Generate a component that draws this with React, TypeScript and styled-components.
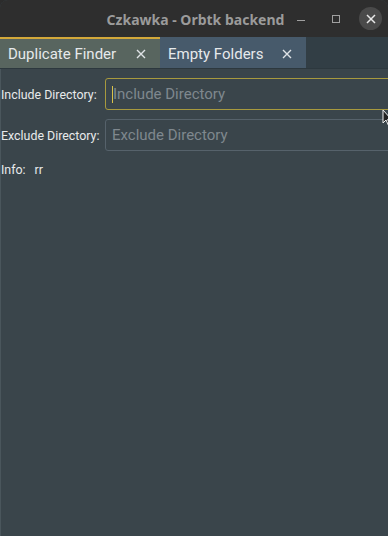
import React from 'react'
import styled, { createGlobalStyle } from 'styled-components'

const GlobalStyle = createGlobalStyle`
  html, body { margin: 0; padding: 0; background: #2c2c2c; }
  body { font-family: Roboto, "Noto Sans", sans-serif; }
`

const Window = styled.div`
  width: 388px;
  height: 536px;
  display: flex;
  flex-direction: column;
  overflow: hidden;
  border-radius: 8px 8px 0 0;
  background: #3a454b;
  position: relative;
`

const TitleBar = styled.div`
  height: 37px;
  flex-shrink: 0;
  background: #2e2e2e;
  display: flex;
  align-items: center;
  justify-content: flex-end;
  position: relative;
`

const Title = styled.div`
  position: absolute;
  left: 0;
  right: 0;
  top: 10px;
  text-align: center;
  padding-left: 3px;
  font-family: "Noto Sans", "DejaVu Sans", sans-serif;
  font-weight: 700;
  font-size: 14px;
  color: #9b9b9b;
`

const Controls = styled.div`
  display: flex;
  align-items: center;
  gap: 12px;
  padding-right: 6px;
  position: relative;
`

const CtrlBtn = styled.div<{ $round?: boolean }>`
  width: 23px;
  height: 23px;
  display: flex;
  align-items: center;
  justify-content: center;
  border-radius: 50%;
  background: ${p => (p.$round ? '#4a4a4a' : 'transparent')};
`

const TabBar = styled.div`
  height: 31px;
  flex-shrink: 0;
  display: flex;
  background: #323e45;
  border-bottom: 1px solid #2d383e;
`

const Tab = styled.div<{ $active?: boolean }>`
  width: ${p => (p.$active ? 160 : 146)}px;
  box-sizing: border-box;
  display: flex;
  align-items: center;
  justify-content: space-between;
  padding: 0 14px 0 8px;
  background: ${p => (p.$active ? '#58655f' : '#475a6b')};
  border-top: 2px solid ${p => (p.$active ? '#d3a83a' : '#475a6b')};
  color: #e6e9eb;
  font-size: 15px;
`

const Body = styled.div`
  flex: 1;
  display: flex;
  flex-direction: column;
  padding: 9px 0 0 0;
  gap: 9px;
  border-left: 1px solid #4a565c;
`

const Row = styled.div`
  display: flex;
  align-items: center;
  gap: 5px;
`

const Label = styled.div`
  width: 99px;
  flex-shrink: 0;
  font-size: 12.4px;
  color: #e8eaeb;
  white-space: nowrap;
`

const Input = styled.div<{ $focus?: boolean }>`
  width: 320px;
  flex-shrink: 0;
  height: 32px;
  box-sizing: border-box;
  border: 1px solid ${p => (p.$focus ? '#a89a3e' : '#56626b')};
  border-radius: 3px;
  display: flex;
  align-items: center;
  padding-left: 6px;
  font-size: 15px;
  color: #7f888e;
`

const Caret = styled.span`
  width: 1px;
  height: 17px;
  background: #d9c24a;
`

const Info = styled.div`
  display: flex;
  gap: 9px;
  font-size: 12.4px;
  color: #e8eaeb;
  padding-top: 2px;
`

const Pointer = styled.svg`
  position: absolute;
  left: 382px;
  top: 109px;
`

const Close = () => (
  <svg width="10" height="10" viewBox="0 0 10 10">
    <path d="M1 1 L9 9 M9 1 L1 9" stroke="#dfe3e6" strokeWidth="1.4" />
  </svg>
)

export default function App() {
  return (
    <Window>
      <GlobalStyle />
      <TitleBar>
        <Title>Czkawka - Orbtk backend</Title>
        <Controls>
          <CtrlBtn>
            <svg width="10" height="10" viewBox="0 0 10 10">
              <path d="M1 6.5 H9" stroke="#a0a0a0" strokeWidth="1" />
            </svg>
          </CtrlBtn>
          <CtrlBtn>
            <svg width="10" height="10" viewBox="0 0 10 10">
              <rect x="1.5" y="1.5" width="7" height="7" fill="none" stroke="#a0a0a0" strokeWidth="1" />
            </svg>
          </CtrlBtn>
          <CtrlBtn $round>
            <svg width="10" height="10" viewBox="0 0 10 10">
              <path d="M1 1 L9 9 M9 1 L1 9" stroke="#e8e8e8" strokeWidth="1.5" />
            </svg>
          </CtrlBtn>
        </Controls>
      </TitleBar>
      <TabBar>
        <Tab $active>
          <span>Duplicate Finder</span>
          <Close />
        </Tab>
        <Tab>
          <span>Empty Folders</span>
          <Close />
        </Tab>
      </TabBar>
      <Body>
        <Row>
          <Label>Include Directory:</Label>
          <Input $focus>
            <Caret />
            Include Directory
          </Input>
        </Row>
        <Row>
          <Label>Exclude Directory:</Label>
          <Input>Exclude Directory</Input>
        </Row>
        <Info>
          <span>Info:</span>
          <span>rr</span>
        </Info>
      </Body>
      <Pointer width="10" height="18" viewBox="0 0 10 18">
        <path d="M1 1 L1 14 L4 11 L6.5 16.5 L8 15.8 L5.6 10.5 L9.5 10.5 Z" fill="#222" stroke="#eee" strokeWidth="1" />
      </Pointer>
    </Window>
  )
}
